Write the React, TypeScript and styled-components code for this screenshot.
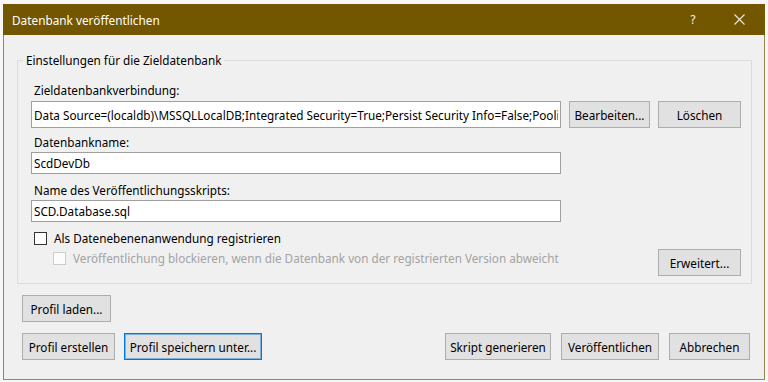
import React from "react";
import styled, { createGlobalStyle } from "styled-components";

const GlobalStyle = createGlobalStyle`
  html, body {
    margin: 0;
    padding: 0;
    background: #f7f7f7;
  }
  body {
    font-family: "Noto Sans", "Open Sans", sans-serif;
    font-size: 11.72px;
    color: #000;
  }
  * { box-sizing: border-box; }
`;

const Window = styled.div`
  margin: 4px 0 0 3px;
  width: 762px;
  height: 376px;
  background: #f0f0f0;
  border: 1px solid #9c8650;
  border-top: none;
  display: flex;
  flex-direction: column;
`;

const TitleBar = styled.div`
  margin: 0 -1px;
  height: 31px;
  background: #735700;
  color: #ffffff;
  display: flex;
  align-items: center;
  padding: 0 3px 0 9px;
`;

const Title = styled.div`
  flex: 1;
  font-size: 11.8px;
  line-height: 16px;
`;

const TitleButton = styled.div`
  width: 46px;
  height: 31px;
  display: flex;
  align-items: center;
  justify-content: center;
  color: #efe8d8;
  font-family: "DejaVu Sans", "Noto Sans", sans-serif;
  font-size: 12px;
  font-weight: 400;
`;

const Body = styled.div`
  flex: 1;
  display: flex;
  flex-direction: column;
  padding: 17px 12px 0 13px;
`;

const Group = styled.fieldset`
  margin: 0;
  padding: 12px 10px 7px 13px;
  border: 1px solid #dcdcdc;
  min-width: 0;
  display: flex;
  flex-direction: column;
`;

const Legend = styled.legend`
  margin-left: -8px;
  padding: 0 3px;
  line-height: 16px;
`;

const FieldLabel = styled.div<{ $gap: number }>`
  height: 20px;
  line-height: 20px;
  padding-left: 3px;
  margin-top: ${(p) => p.$gap}px;
  white-space: nowrap;
`;

const Row = styled.div`
  display: flex;
  gap: 8px;
  margin-top: 1px;
`;

const TextBox = styled.input<{ $h: number }>`
  width: 530px;
  height: ${(p) => p.$h}px;
  margin: 0;
  padding: 0 2px;
  border: 1px solid #a0a0a0;
  background: #ffffff;
  font: inherit;
  color: #000;
  outline: none;
`;

const Button = styled.button<{ $w: number; $default?: boolean }>`
  width: ${(p) => p.$w}px;
  height: 27px;
  margin: 0;
  padding: 0;
  background: #e1e1e1;
  border: 1px solid ${(p) => (p.$default ? "#0078d7" : "#adadad")};
  box-shadow: ${(p) => (p.$default ? "inset 0 0 0 1px rgba(0,120,215,0.45)" : "none")};
  font: inherit;
  color: #000;
  white-space: nowrap;
  flex: none;
`;

const CheckRow = styled.label<{ $indent: number; $disabled?: boolean }>`
  display: flex;
  align-items: center;
  gap: 7px;
  height: 20px;
  padding-left: ${(p) => p.$indent}px;
  color: ${(p) => (p.$disabled ? "#a3a3a3" : "#000")};
  white-space: nowrap;
`;

const CheckRowWrap = styled.div`
  margin-top: 6px;
`;

const Box = styled.span<{ $disabled?: boolean }>`
  width: 13px;
  height: 13px;
  flex: none;
  border: 1px solid ${(p) => (p.$disabled ? "#cccccc" : "#333333")};
  background: ${(p) => (p.$disabled ? "#fcfcfc" : "#ffffff")};
`;

const LastRow = styled.div`
  display: flex;
  justify-content: space-between;
  align-items: flex-start;
`;

const RaisedButton = styled(Button)`
  margin-top: 1px;
`;

const Footer = styled.div`
  display: flex;
  flex-direction: column;
  align-items: flex-start;
  gap: 11px;
  margin-top: 11px;
  padding: 0 2px 0 5px;
`;

const FooterRow = styled.div`
  align-self: stretch;
  display: flex;
  justify-content: space-between;
`;

const ButtonGroup = styled.div<{ $gap: number }>`
  display: flex;
  gap: ${(p) => p.$gap}px;
`;

const CloseIcon = () => (
  <svg width="11" height="11" viewBox="0 0 11 11">
    <path d="M0.5 0.5 L10.5 10.5 M10.5 0.5 L0.5 10.5" stroke="#f0e8d8" strokeWidth="1.1" />
  </svg>
);

export default function App() {
  return (
    <>
      <GlobalStyle />
      <Window>
        <TitleBar>
          <Title>Datenbank veröffentlichen</Title>
          <TitleButton>?</TitleButton>
          <TitleButton>
            <CloseIcon />
          </TitleButton>
        </TitleBar>
        <Body>
          <Group>
            <Legend>Einstellungen für die Zieldatenbank</Legend>
            <FieldLabel $gap={0}>Zieldatenbankverbindung:</FieldLabel>
            <Row>
              <TextBox
                $h={27}
                readOnly
                value="Data Source=(localdb)\MSSQLLocalDB;Integrated Security=True;Persist Security Info=False;Pooling=False;MultipleActiveResultSets=False"
              />
              <Button $w={81}>Bearbeiten...</Button>
              <Button $w={83}>Löschen</Button>
            </Row>
            <FieldLabel $gap={4}>Datenbankname:</FieldLabel>
            <TextBox $h={22} readOnly value="ScdDevDb" />
            <FieldLabel $gap={6}>Name des Veröffentlichungsskripts:</FieldLabel>
            <TextBox $h={22} readOnly value="SCD.Database.sql" />
            <CheckRowWrap>
              <CheckRow $indent={3}>
                <Box />
                Als Datenebenenanwendung registrieren
              </CheckRow>
            </CheckRowWrap>
            <LastRow>
              <CheckRow $indent={22} $disabled>
                <Box $disabled />
                Veröffentlichung blockieren, wenn die Datenbank von der registrierten Version abweicht
              </CheckRow>
              <RaisedButton $w={83}>Erweitert...</RaisedButton>
            </LastRow>
          </Group>
          <Footer>
            <Button $w={89}>Profil laden...</Button>
            <FooterRow>
              <ButtonGroup $gap={9}>
                <Button $w={93}>Profil erstellen</Button>
                <Button $w={138} $default>
                  Profil speichern unter...
                </Button>
              </ButtonGroup>
              <ButtonGroup $gap={10}>
                <Button $w={106}>Skript generieren</Button>
                <Button $w={98}>Veröffentlichen</Button>
                <Button $w={81}>Abbrechen</Button>
              </ButtonGroup>
            </FooterRow>
          </Footer>
        </Body>
      </Window>
    </>
  );
}
